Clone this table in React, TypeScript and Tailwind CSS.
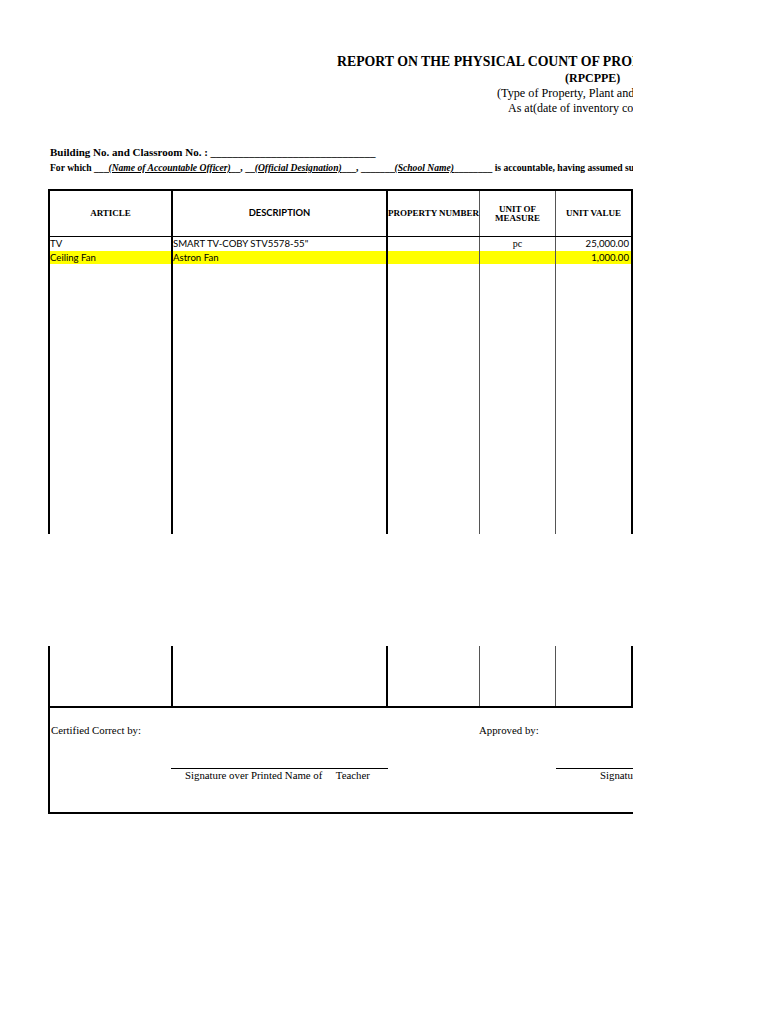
import React from "react";

const serif = { fontFamily: '"Liberation Serif", "Times New Roman", serif' };
const sans = { fontFamily: 'Lato, Carlito, "Liberation Sans", sans-serif' };

const cols = ["w-[123px]", "w-[215px]", "w-[92px]", "w-[76px]", "w-[77px]"];
const colBorders = [
  "border-r-2 border-black",
  "border-r-2 border-black",
  "border-r border-[#555]",
  "border-r border-[#555]",
  "border-r-2 border-black",
];

const items = [
  { article: "TV", description: 'SMART TV-COBY STV5578-55"', unit: "pc", value: "25,000.00", highlight: false },
  { article: "Ceiling Fan", description: "Astron Fan", unit: "", value: "1,000.00", highlight: true },
];

function EmptyColumns({ height }: { height: string }) {
  return (
    <div className={`flex ${height} border-l-2 border-black`}>
      {cols.map((w, i) => (
        <div key={i} className={`${w} shrink-0 ${colBorders[i]}`} />
      ))}
    </div>
  );
}

export default function App() {
  return (
    <div className="min-h-[1024px] bg-white text-black">
      <div className="w-[633px] overflow-hidden">
        {/* Title block */}
        <div className="pt-[54px] whitespace-nowrap" style={serif}>
          <div className="pl-[337px] text-[13.8px] font-bold leading-[16px]">
            REPORT ON THE PHYSICAL COUNT OF PROPERTY, PLANT AND EQUIPMENT
          </div>
          <div className="pl-[565px] mt-[1px] text-[12px] font-bold leading-[15px]">(RPCPPE)</div>
          <div className="pl-[497px] text-[12.2px] leading-[15px]">
            (Type of Property, Plant and Equipment)
          </div>
          <div className="pl-[508px] text-[12px] leading-[15px]">As at(date of inventory count)</div>
        </div>

        {/* Building / accountable officer */}
        <div className="pl-[50px] mt-[29px] whitespace-nowrap" style={serif}>
          <div className="text-[11px] font-bold leading-[14px]">
            Building No. and Classroom No. : ______________________________
          </div>
          <div className="mt-[2px] text-[9.6px] font-bold leading-[13px]">
            For which ___<span className="italic underline">(Name of Accountable Officer)</span>__, __
            <span className="italic underline">(Official Designation)</span>___, _______
            <span className="italic underline">(School Name)</span>________ is accountable, having assumed such
            accountability on (Date of Assumption).
          </div>
        </div>

        {/* Table */}
        <div className="ml-[48px] mt-[15px] w-[585px]">
          <div className="flex h-[48px] border-l-2 border-t-2 border-b border-black">
            <div className={`${cols[0]} shrink-0 ${colBorders[0]} flex items-center justify-center text-[9px] font-bold`} style={serif}>
              ARTICLE
            </div>
            <div className={`${cols[1]} shrink-0 ${colBorders[1]} flex items-center justify-center text-[9.4px] font-bold`} style={sans}>
              DESCRIPTION
            </div>
            <div className={`${cols[2]} shrink-0 ${colBorders[2]} flex items-center justify-center text-[9px] font-bold whitespace-nowrap`} style={serif}>
              PROPERTY NUMBER
            </div>
            <div className={`${cols[3]} shrink-0 ${colBorders[3]} flex items-center justify-center text-center text-[9px] font-bold leading-[9px]`} style={serif}>
              UNIT OF
              <br />
              MEASURE
            </div>
            <div className={`${cols[4]} shrink-0 ${colBorders[4]} flex items-center justify-center text-[9px] font-bold`} style={serif}>
              UNIT VALUE
            </div>
          </div>

          {items.map((it, idx) => (
            <div
              key={idx}
              className={`flex h-[13.5px] border-l-2 border-black text-[9.6px] leading-[13px] ${it.highlight ? "bg-[#ffff00]" : ""}`}
              style={sans}
            >
              <div className={`${cols[0]} shrink-0 ${colBorders[0]} whitespace-nowrap`}>{it.article}</div>
              <div className={`${cols[1]} shrink-0 ${colBorders[1]} whitespace-nowrap`}>{it.description}</div>
              <div className={`${cols[2]} shrink-0 ${colBorders[2]}`} />
              <div className={`${cols[3]} shrink-0 ${colBorders[3]} text-center text-[10px]`} style={serif}>
                {it.unit}
              </div>
              <div className={`${cols[4]} shrink-0 ${colBorders[4]} text-right pr-[2px]`}>{it.value}</div>
            </div>
          ))}

          <EmptyColumns height="h-[270px]" />
          <div className="h-[112px]" />
          <div className="border-b-2 border-black">
            <EmptyColumns height="h-[60px]" />
          </div>

          {/* Signatures */}
          <div className="h-[106px] border-l-2 border-b-2 border-black text-[10.8px] leading-[14px]" style={serif}>
            <div className="flex pt-[15px]">
              <div className="w-[429px] pl-[1px]">Certified Correct by:</div>
              <div>Approved by:</div>
            </div>
            <div className="flex mt-[31px] leading-[12px]">
              <div className="w-[121px] shrink-0" />
              <div className="w-[217px] shrink-0 border-t border-black pl-[14px] whitespace-nowrap">
                Signature over Printed Name of&nbsp;&nbsp;&nbsp;&nbsp;&nbsp;Teacher
              </div>
              <div className="w-[168px] shrink-0" />
              <div className="w-[90px] shrink-0 border-t border-black pl-[44px] whitespace-nowrap">
                Signature over Printed Name of Head of Property and/or Supply Division/Unit
              </div>
            </div>
          </div>
        </div>
      </div>
    </div>
  );
}
